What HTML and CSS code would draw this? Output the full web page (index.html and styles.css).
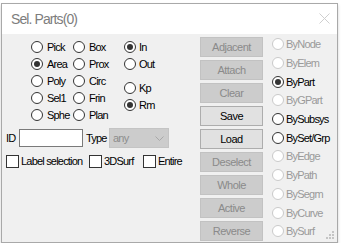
FILE: index.html
```html
<!DOCTYPE html>
<html lang="en">
<head>
  <meta charset="UTF-8" />
  <title>Sel. Parts</title>
  <link rel="stylesheet" href="styles.css">
</head>
<body>

  <div class="window">
    <div class="titlebar">
      <span class="title">Sel. Parts(0)</span>
      <svg class="close" width="11" height="11" viewBox="0 0 11 11">
        <path d="M0.5 0.5 L10.5 10.5 M10.5 0.5 L0.5 10.5" stroke="#cfcfcf" stroke-width="1" fill="none"/>
      </svg>
    </div>

    <div class="panel">
      <div class="left">
        <div class="modes">
          <div class="col col-a">
            <label class="radio"><span class="circle"></span>Pick</label>
            <label class="radio checked"><span class="circle"></span>Area</label>
            <label class="radio"><span class="circle"></span>Poly</label>
            <label class="radio"><span class="circle"></span>Sel1</label>
            <label class="radio"><span class="circle"></span>Sphe</label>
          </div>
          <div class="col col-b">
            <label class="radio"><span class="circle"></span>Box</label>
            <label class="radio"><span class="circle"></span>Prox</label>
            <label class="radio"><span class="circle"></span>Circ</label>
            <label class="radio"><span class="circle"></span>Frin</label>
            <label class="radio"><span class="circle"></span>Plan</label>
          </div>
          <div class="col col-c">
            <label class="radio checked"><span class="circle"></span>In</label>
            <label class="radio"><span class="circle"></span>Out</label>
            <label class="radio kp"><span class="circle"></span>Kp</label>
            <label class="radio checked"><span class="circle"></span>Rm</label>
          </div>
        </div>

        <div class="id-row">
          <span class="id-label">ID</span>
          <input class="id-input" type="text" />
          <span class="type-label">Type</span>
          <div class="combo">
            <span>any</span>
            <svg width="9" height="5" viewBox="0 0 9 5"><path d="M0.5 0.5 L4.5 4.5 L8.5 0.5" stroke="#a8a8a8" fill="none"/></svg>
          </div>
        </div>

        <div class="check-row">
          <label class="check"><span class="box"></span>Label selection</label>
          <label class="check"><span class="box"></span>3DSurf</label>
          <label class="check"><span class="box"></span>Entire</label>
        </div>
      </div>

      <div class="actions">
        <button class="btn" disabled>Adjacent</button>
        <button class="btn" disabled>Attach</button>
        <button class="btn" disabled>Clear</button>
        <button class="btn">Save</button>
        <button class="btn">Load</button>
        <button class="btn" disabled>Deselect</button>
        <button class="btn" disabled>Whole</button>
        <button class="btn" disabled>Active</button>
        <button class="btn" disabled>Reverse</button>
      </div>

      <div class="by-list">
        <label class="radio off"><span class="circle"></span>ByNode</label>
        <label class="radio off"><span class="circle"></span>ByElem</label>
        <label class="radio checked"><span class="circle"></span>ByPart</label>
        <label class="radio off"><span class="circle"></span>ByGPart</label>
        <label class="radio"><span class="circle"></span>BySubsys</label>
        <label class="radio"><span class="circle"></span>BySet/Grp</label>
        <label class="radio off"><span class="circle"></span>ByEdge</label>
        <label class="radio off"><span class="circle"></span>ByPath</label>
        <label class="radio off"><span class="circle"></span>BySegm</label>
        <label class="radio off"><span class="circle"></span>ByCurve</label>
        <label class="radio off"><span class="circle"></span>BySurf</label>
      </div>
    </div>

    <svg class="grip" width="8" height="8" viewBox="0 0 8 8">
      <rect x="6" y="0" width="2" height="2" fill="#c4c4c4"/>
      <rect x="3" y="3" width="2" height="2" fill="#c4c4c4"/>
      <rect x="6" y="3" width="2" height="2" fill="#c4c4c4"/>
      <rect x="0" y="6" width="2" height="2" fill="#c4c4c4"/>
      <rect x="3" y="6" width="2" height="2" fill="#c4c4c4"/>
      <rect x="6" y="6" width="2" height="2" fill="#c4c4c4"/>
    </svg>
  </div>

</body>
</html>
```

FILE: styles.css
```css
* {
  margin: 0;
  padding: 0;
  box-sizing: border-box;
}

body {
  background-color: #fff;
  font-family: "Liberation Sans", Arial, sans-serif;
  font-size: 11px;
  letter-spacing: -0.8px;
  color: #000;
}

.window {
  position: relative;
  margin: 3px 0 0 1px;
  width: 337px;
  height: 240px;
  border: 1px solid #a9a9a9;
  background-color: #f0f0f0;
  box-shadow: 0 2px 3px rgba(0, 0, 0, 0.18);
}

.titlebar {
  height: 30px;
  background-color: #fff;
  display: flex;
  align-items: center;
  justify-content: space-between;
  padding: 0 7px 0 9px;
}

.title {
  font-size: 14px;
  letter-spacing: -0.9px;
  color: #7d7d7d;
}

.close {
  margin-top: -1px;
}

.panel {
  display: flex;
}

.left {
  width: 198px;
}

.modes {
  display: flex;
  padding: 4px 0 0 29px;
}

.col {
  display: flex;
  flex-direction: column;
}

.col-a { width: 42px; }
.col-b { width: 51px; }

.radio {
  display: flex;
  align-items: center;
  height: 17px;
  white-space: nowrap;
}

.circle {
  width: 12px;
  height: 12px;
  border: 1px solid #333;
  border-radius: 50%;
  background-color: #fff;
  margin-right: 4px;
  display: flex;
  align-items: center;
  justify-content: center;
  flex-shrink: 0;
}

.radio.checked .circle::after {
  content: "";
  width: 6px;
  height: 6px;
  border-radius: 50%;
  background-color: #333;
}

.col-c .circle {
  margin-right: 3px;
}

.radio.kp {
  margin-top: 7px;
}

.id-row {
  display: flex;
  align-items: center;
  height: 20px;
  margin-top: 5px;
  padding-left: 4px;
}

.id-label {
  width: 13px;
}

.id-input {
  width: 64px;
  height: 18px;
  border: 1px solid #7a7a7a;
  background-color: #fff;
  outline: none;
}

.type-label {
  width: 23px;
  margin-left: 3px;
}

.combo {
  width: 60px;
  height: 20px;
  background-color: #cccccc;
  border: 1px solid #c4c4c4;
  color: #8d8d8d;
  display: flex;
  align-items: center;
  justify-content: space-between;
  padding: 0 4px 0 3px;
}

.check-row {
  display: grid;
  grid-template-columns: 83px 54px auto;
  margin-top: 6px;
  padding-left: 4px;
}

.check {
  display: flex;
  align-items: center;
  height: 14px;
  white-space: nowrap;
}

.box {
  width: 13px;
  height: 13px;
  border: 1px solid #333;
  background-color: #fff;
  margin-right: 2px;
  flex-shrink: 0;
}

.actions {
  width: 63px;
  display: flex;
  flex-direction: column;
  gap: 3px;
  margin-top: 3px;
}

.btn {
  height: 20px;
  font-family: inherit;
  font-size: 11px;
  letter-spacing: -0.5px;
  color: #000;
  background-color: #e1e1e1;
  border: 1px solid #adadad;
}

.btn:disabled {
  color: #8a8a8a;
  background-color: #cccccc;
  border-color: #c2c2c2;
}

.by-list {
  margin: 1px 0 0 9px;
  display: flex;
  flex-direction: column;
}

.by-list .radio {
  height: 18.7px;
}

.by-list .circle {
  margin-right: 2px;
}

.radio.off {
  color: #9a9a9a;
}

.radio.off .circle {
  border-color: #cacaca;
}

.grip {
  position: absolute;
  right: 3px;
  bottom: 3px;
}
```
